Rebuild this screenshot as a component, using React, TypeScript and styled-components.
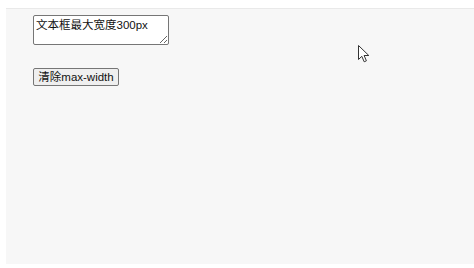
import styled, { createGlobalStyle } from "styled-components";

const GlobalStyle = createGlobalStyle`
  html, body {
    margin: 0;
    padding: 0;
    background: #ffffff;
  }
`;

const Frame = styled.div`
  position: relative;
  margin: 8px 0 0 6px;
  height: 256px;
  border-top: 1px solid #e9e9e9;
  background: #f7f7f7;
  padding: 6px 0 0 27px;
  box-sizing: border-box;
  display: flex;
  flex-direction: column;
  align-items: flex-start;
  gap: 23px;
  font-family: "Liberation Sans", "Noto Sans CJK SC", sans-serif;
`;

const TextBox = styled.textarea`
  box-sizing: border-box;
  width: 136px;
  max-width: 300px;
  height: 30px;
  margin: 0;
  padding: 2px 2px;
  border: 1px solid #767676;
  border-radius: 2px;
  background: #ffffff;
  color: #111;
  font-family: "Liberation Sans", "Noto Sans CJK SC", sans-serif;
  font-size: 11.5px;
  line-height: 14px;
  resize: both;
`;

const ClearButton = styled.button`
  box-sizing: border-box;
  width: 86px;
  height: 18px;
  margin: 0;
  padding: 0 3px;
  border: 1px solid #767676;
  border-radius: 2px;
  background: #efefef;
  color: #111;
  font-family: "Liberation Sans", "Noto Sans CJK SC", sans-serif;
  font-size: 11.5px;
  line-height: 16px;
  white-space: nowrap;
  text-align: center;
`;

const Pointer = styled.svg`
  position: absolute;
  left: 352px;
  top: 36px;
  width: 12px;
  height: 18px;
`;

export default function App() {
  return (
    <>
      <GlobalStyle />
      <Frame>
        <TextBox defaultValue="文本框最大宽度300px" />
        <ClearButton>清除max-width</ClearButton>
        <Pointer viewBox="0 0 12 18">
          <path
            d="M0.5 0.5 L0.5 14.5 L3.8 11.3 L6.2 16.8 L8.4 15.8 L6.1 10.5 L10.8 10.5 Z"
            fill="#ffffff"
            stroke="#333"
            strokeWidth="1"
            strokeLinejoin="round"
          />
        </Pointer>
      </Frame>
    </>
  );
}
